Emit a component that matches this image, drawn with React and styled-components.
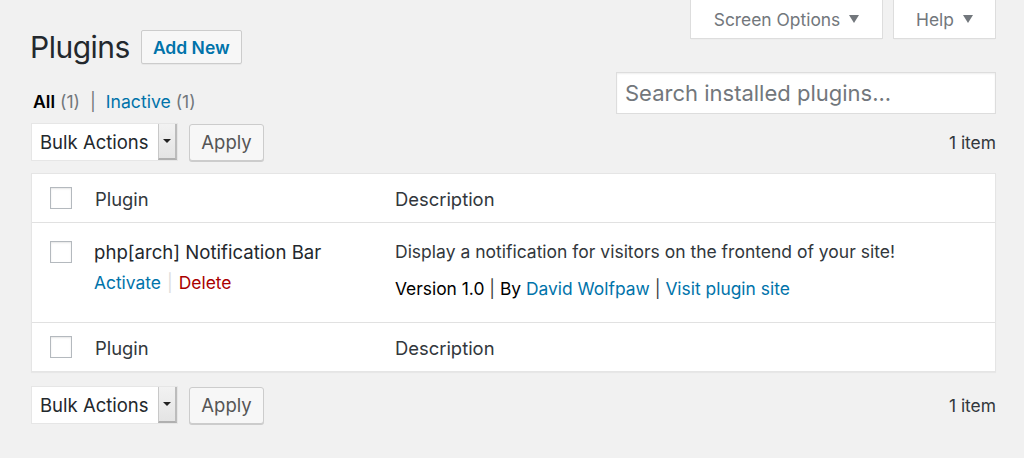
import React from "react";
import styled, { createGlobalStyle } from "styled-components";

const Global = createGlobalStyle`
  html, body { margin: 0; padding: 0; background: #f1f1f1; }
  body { font-family: Inter, "Noto Sans", "Liberation Sans", sans-serif; color: #32373c; }
  * { box-sizing: border-box; }
`;

const Page = styled.div`
  padding: 0 28px 0 31px;
  width: 1024px;
  height: 458px;
  overflow: hidden;
`;

const Header = styled.div`
  display: flex;
  justify-content: space-between;
  align-items: flex-start;
`;

const TitleWrap = styled.div`
  display: flex;
  align-items: center;
  gap: 11px;
  padding-top: 30px;
`;

const Title = styled.h1`
  margin: 0 0 0 -1px;
  font-size: 30px;
  font-weight: 400;
  color: #23282d;
  line-height: 33px;
  letter-spacing: -0.5px;
`;

const AddNew = styled.button`
  height: 34px;
  padding: 0 11px;
  font-family: inherit;
  font-size: 17.5px;
  font-weight: 600;
  color: #0073aa;
  background: #f7f7f7;
  border: 1px solid #ccc;
  border-radius: 2px;
  box-shadow: 0 1px 0 rgba(0, 0, 0, 0.04);
`;

const Tabs = styled.div`
  display: flex;
  gap: 10px;
`;

const Tab = styled.div`
  height: 39px;
  width: ${(p) => p.w}px;
  display: flex;
  align-items: center;
  justify-content: center;
  gap: 9px;
  background: #fff;
  border: 1px solid #ddd;
  border-top: none;
  box-shadow: 0 1px 1px -1px rgba(0, 0, 0, 0.1);
  font-size: 17.4px;
  color: #72777c;
`;

const Caret = styled.span`
  width: 0;
  height: 0;
  border-left: 5px solid transparent;
  border-right: 5px solid transparent;
  border-top: 8px solid #72777c;
`;

const FilterRow = styled.div`
  display: flex;
  justify-content: space-between;
  align-items: flex-end;
  margin-top: 8px;
`;

const Filters = styled.div`
  display: flex;
  align-items: center;
  font-size: 17.6px;
  line-height: 22px;
  padding-left: 2px;
  margin-bottom: 1px;
  color: #72777c;
`;

const FilterLink = styled.span`
  color: ${(p) => (p.current ? "#000" : "#0073aa")};
  font-weight: ${(p) => (p.current ? 600 : 400)};
`;

const Sep = styled.span`
  margin: 0 ${(p) => (p.light ? 6 : 10)}px;
  color: ${(p) => (p.light ? "#ddd" : "#72777c")};
`;

const Search = styled.input`
  width: 380px;
  height: 42px;
  border: 1px solid #ddd;
  background: #fff;
  box-shadow: inset 0 1px 2px rgba(0, 0, 0, 0.07);
  padding: 0 8px;
  font-family: inherit;
  font-size: 22px;
  color: #32373c;
  outline: none;
  &::placeholder { color: #72777c; }
`;

const TableNav = styled.div`
  display: flex;
  align-items: center;
  justify-content: space-between;
  height: 38px;
  margin-top: ${(p) => p.mt}px;
`;

const NavLeft = styled.div`
  display: flex;
  align-items: center;
  gap: 11px;
`;

const Select = styled.div`
  display: flex;
  width: 147px;
  height: 38px;
  background: #fff;
  border: 1px solid #e6e6e6;
`;

const SelectLabel = styled.div`
  flex: 1;
  display: flex;
  align-items: center;
  padding-left: 8px;
  font-size: 18.5px;
  color: #23282d;
  white-space: nowrap;
`;

const SelectArrow = styled.div`
  width: 19px;
  display: flex;
  align-items: center;
  justify-content: center;
  background: linear-gradient(#f2f2f2, #e4e4e4);
  border-left: 1px solid #c8c8c8;
  border-right: 2px solid #bcbcbc;
  border-bottom: 2px solid #b0b0b0;
`;

const SmallCaret = styled.span`
  width: 0;
  height: 0;
  border-left: 4px solid transparent;
  border-right: 4px solid transparent;
  border-top: 4px solid #222;
`;

const Apply = styled.button`
  width: 75px;
  height: 37px;
  font-family: inherit;
  font-size: 18.5px;
  color: #555;
  background: #f7f7f7;
  border: 1px solid #ccc;
  border-radius: 3px;
  box-shadow: 0 1px 0 #ccc;
`;

const Count = styled.div`
  font-size: 17.4px;
  color: #32373c;
`;

const Table = styled.div`
  margin-top: 12px;
  background: #fff;
  border: 1px solid #e5e5e5;
  box-shadow: 0 1px 1px rgba(0, 0, 0, 0.04);
`;

const Row = styled.div`
  display: grid;
  grid-template-columns: 63px 300px 1fr;
  height: ${(p) => p.h}px;
  border-top: ${(p) => (p.top ? "1px solid #e1e1e1" : "none")};
  border-bottom: ${(p) => (p.bottom ? "1px solid #e1e1e1" : "none")};
  align-items: ${(p) => (p.body ? "start" : "center")};
`;

const CheckCell = styled.div`
  padding-left: 18px;
  padding-top: ${(p) => p.pt || 0}px;
  display: flex;
`;

const Checkbox = styled.span`
  width: 22px;
  height: 22px;
  background: #fff;
  border: 1px solid #b4b9be;
  box-shadow: inset 0 1px 2px rgba(0, 0, 0, 0.1);
`;

const HeadText = styled.div`
  font-size: 18.4px;
  color: #32373c;
  padding-top: 2px;
`;

const PluginCell = styled.div`
  padding-top: 17px;
  margin-left: -1px;
`;

const PluginName = styled.div`
  font-size: 18.6px;
  line-height: 24px;
  color: #23282d;
`;

const Actions = styled.div`
  margin-top: 8px;
  font-size: 17.4px;
  line-height: 22px;
  display: flex;
  align-items: center;
`;

const ActionLink = styled.span`
  color: ${(p) => (p.danger ? "#a00" : "#0073aa")};
`;

const DescCell = styled.div`
  padding-top: 18px;
`;

const DescText = styled.div`
  font-size: 17.5px;
  line-height: 22px;
  color: #32373c;
`;

const Meta = styled.div`
  margin-top: 15px;
  font-size: 17.4px;
  line-height: 22px;
  color: #000;
`;

const Link = styled.span`
  color: #0073aa;
`;

const Pipe = styled.span`
  color: #444;
`;

function Nav({ mt }) {
  return (
    <TableNav mt={mt}>
      <NavLeft>
        <Select>
          <SelectLabel>Bulk Actions</SelectLabel>
          <SelectArrow>
            <SmallCaret />
          </SelectArrow>
        </Select>
        <Apply>Apply</Apply>
      </NavLeft>
      <Count>1 item</Count>
    </TableNav>
  );
}

export default function App() {
  return (
    <>
      <Global />
      <Page>
        <Header>
          <TitleWrap>
            <Title>Plugins</Title>
            <AddNew>Add New</AddNew>
          </TitleWrap>
          <Tabs>
            <Tab w={193}>
              Screen Options <Caret />
            </Tab>
            <Tab w={103}>
              Help <Caret />
            </Tab>
          </Tabs>
        </Header>
        <FilterRow>
          <Filters>
            <span>
              <FilterLink current>All</FilterLink> (1)
            </span>
            <Sep>|</Sep>
            <span>
              <FilterLink>Inactive</FilterLink> (1)
            </span>
          </Filters>
          <Search placeholder="Search installed plugins..." />
        </FilterRow>
        <Nav mt={9} />
        <Table>
          <Row h={49} bottom>
            <CheckCell>
              <Checkbox />
            </CheckCell>
            <HeadText>Plugin</HeadText>
            <HeadText>Description</HeadText>
          </Row>
          <Row h={99} body>
            <CheckCell pt={18}>
              <Checkbox />
            </CheckCell>
            <PluginCell>
              <PluginName>php[arch] Notification Bar</PluginName>
              <Actions>
                <ActionLink>Activate</ActionLink>
                <Sep light>|</Sep>
                <ActionLink danger>Delete</ActionLink>
              </Actions>
            </PluginCell>
            <DescCell>
              <DescText>
                Display a notification for visitors on the frontend of your site!
              </DescText>
              <Meta>
                Version 1.0 <Pipe>|</Pipe> By <Link>David Wolfpaw</Link> <Pipe>|</Pipe>{" "}
                <Link>Visit plugin site</Link>
              </Meta>
            </DescCell>
          </Row>
          <Row h={49} top>
            <CheckCell>
              <Checkbox />
            </CheckCell>
            <HeadText>Plugin</HeadText>
            <HeadText>Description</HeadText>
          </Row>
        </Table>
        <Nav mt={14} />
      </Page>
    </>
  );
}
